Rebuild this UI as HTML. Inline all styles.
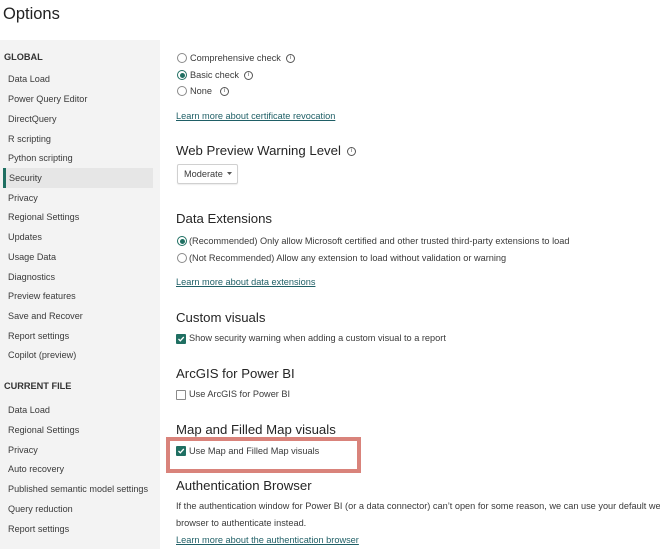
<!DOCTYPE html>
<html><head><meta charset="utf-8"><style>
*{margin:0;padding:0;box-sizing:border-box}
body{width:660px;height:549px;overflow:hidden;background:#fff;font-family:"Liberation Sans",sans-serif;color:#333;position:relative}
.a{position:absolute;white-space:nowrap;line-height:14px}
.t{font-size:9.2px;color:#3a3a3a}
.h{font-size:13.2px;color:#252525;line-height:18px}
.sb{position:absolute;left:0;top:40px;width:160px;height:509px;background:#f3f3f3}
.side{font-size:9.1px;color:#3a3a3a;left:8px}
.cap{font-size:9.2px;font-weight:bold;color:#333;left:4px}
.lnk{font-size:9.2px;color:#1f5f66;text-decoration:underline}
.r{position:absolute;width:10px;height:10px;border:1px solid #8a8a8a;border-radius:50%;background:#fff}
.r.on{border-color:#1f6f62}
.r.on::after{content:"";position:absolute;left:1.5px;top:1.5px;width:5px;height:5px;border-radius:50%;background:#1f6f62}
.c{position:absolute;width:10px;height:10px;border:1px solid #8a8a8a;background:#fff;border-radius:1px}
.c.on{background:#1f6f62;border-color:#1f6f62}
.i{position:absolute;width:9px;height:9px;border:1px solid #555;border-radius:50%;font-size:6px;line-height:7px;text-align:center;color:#555}
</style></head><body>
<div class="a" style="left:3px;top:4px;font-size:16.5px;line-height:20px;color:#222">Options</div>
<div class="sb"></div>
<div class="a" style="left:3px;top:168px;width:150px;height:20px;background:#e6e6e6"></div>
<div class="a" style="left:3px;top:168px;width:3px;height:20px;background:#1f6f62"></div>
<div class="a cap" style="top:50px">GLOBAL</div>
<div class="a side" style="top:72px">Data Load</div>
<div class="a side" style="top:92px">Power Query Editor</div>
<div class="a side" style="top:112px">DirectQuery</div>
<div class="a side" style="top:132px">R scripting</div>
<div class="a side" style="top:151px">Python scripting</div>
<div class="a side" style="top:171px;left:9px">Security</div>
<div class="a side" style="top:191px">Privacy</div>
<div class="a side" style="top:210px">Regional Settings</div>
<div class="a side" style="top:230px">Updates</div>
<div class="a side" style="top:250px">Usage Data</div>
<div class="a side" style="top:270px">Diagnostics</div>
<div class="a side" style="top:289px">Preview features</div>
<div class="a side" style="top:309px">Save and Recover</div>
<div class="a side" style="top:329px">Report settings</div>
<div class="a side" style="top:348px">Copilot (preview)</div>
<div class="a cap" style="top:379px">CURRENT FILE</div>
<div class="a side" style="top:403px">Data Load</div>
<div class="a side" style="top:423px">Regional Settings</div>
<div class="a side" style="top:443px">Privacy</div>
<div class="a side" style="top:462px">Auto recovery</div>
<div class="a side" style="top:482px">Published semantic model settings</div>
<div class="a side" style="top:502px">Query reduction</div>
<div class="a side" style="top:522px">Report settings</div>

<div class="r" style="left:177px;top:53px"></div><div class="a t" style="left:190px;top:51px">Comprehensive check</div><div class="i" style="left:286px;top:54px">i</div>
<div class="r on" style="left:177px;top:70px"></div><div class="a t" style="left:190px;top:68px">Basic check</div><div class="i" style="left:244px;top:71px">i</div>
<div class="r" style="left:177px;top:86px"></div><div class="a t" style="left:190px;top:84px">None</div><div class="i" style="left:220px;top:87px">i</div>
<div class="a lnk" style="left:176px;top:109px">Learn more about certificate revocation</div>

<div class="a h" style="left:176px;top:142px">Web Preview Warning Level</div><div class="i" style="left:347px;top:147px">i</div>
<div class="a" style="left:177px;top:164px;width:61px;height:20px;border:1px solid #d0d0d0;border-radius:2px;box-shadow:0 1px 1px rgba(0,0,0,.08)"></div>
<div class="a t" style="left:184px;top:167px">Moderate</div>
<svg class="a" style="left:227px;top:172px" width="5" height="4"><path d="M0 0H5L2.5 3Z" fill="#555"/></svg>

<div class="a h" style="left:176px;top:210px">Data Extensions</div>
<div class="r on" style="left:177px;top:236px"></div><div class="a t" style="left:189px;top:234px">(Recommended) Only allow Microsoft certified and other trusted third-party extensions to load</div>
<div class="r" style="left:177px;top:253px"></div><div class="a t" style="left:189px;top:251px">(Not Recommended) Allow any extension to load without validation or warning</div>
<div class="a lnk" style="left:176px;top:275px">Learn more about data extensions</div>

<div class="a h" style="left:176px;top:309px">Custom visuals</div>
<div class="c on" style="left:176px;top:334px"><svg width="8" height="8" style="position:absolute;left:0;top:0"><path d="M1.5 4L3.3 5.8L6.8 2" stroke="#fff" stroke-width="1.3" fill="none"/></svg></div>
<div class="a t" style="left:189px;top:331px">Show security warning when adding a custom visual to a report</div>

<div class="a h" style="left:176px;top:365px">ArcGIS for Power BI</div>
<div class="c" style="left:176px;top:390px"></div>
<div class="a t" style="left:189px;top:387px">Use ArcGIS for Power BI</div>

<div class="a h" style="left:176px;top:421px">Map and Filled Map visuals</div>
<div class="a" style="left:166px;top:437px;width:195px;height:36px;border:4px solid #d9837b"></div>
<div class="c on" style="left:176px;top:446px"><svg width="8" height="8" style="position:absolute;left:0;top:0"><path d="M1.5 4L3.3 5.8L6.8 2" stroke="#fff" stroke-width="1.3" fill="none"/></svg></div>
<div class="a t" style="left:189px;top:444px">Use Map and Filled Map visuals</div>

<div class="a h" style="left:176px;top:477px">Authentication Browser</div>
<div class="a t" style="left:176px;top:499px">If the authentication window for Power BI (or a data connector) can’t open for some reason, we can use your default web</div>
<div class="a t" style="left:176px;top:516px">browser to authenticate instead.</div>
<div class="a lnk" style="left:176px;top:533px">Learn more about the authentication browser</div>
</body></html>
